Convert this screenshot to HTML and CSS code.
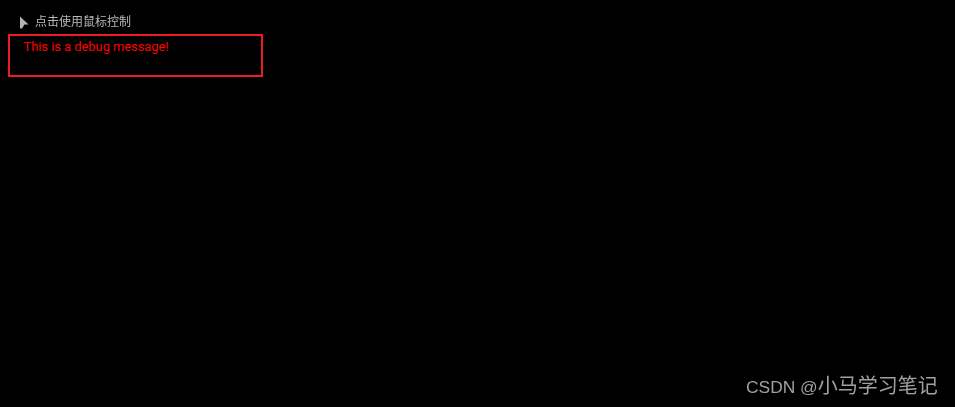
FILE: index.html
```html
<!DOCTYPE html>
<html lang="zh">
<head>
<meta charset="utf-8">
<title>Debug</title>
<link rel="stylesheet" href="styles.css">
</head>
<body>
<main class="stage">
  <div class="hint">
    <svg class="cursor" width="10" height="14" viewBox="0 0 10 14"><path d="M1 0.5 L9.5 8.5 L5.5 8.5 L3 12.5 L1 12.5 Z" fill="#b4b4b4"/></svg>
    <span class="hint-text">点击使用鼠标控制</span>
  </div>
  <div class="debug">This is a debug message!</div>
  <div class="spacer"></div>
  <div class="mark"><span class="mark-latin">CSDN @</span>小马学习笔记</div>
</main>
</body>
</html>
```
FILE: styles.css
```css
html, body {
  margin: 0;
  height: 100%;
  background: #000;
  overflow: hidden;
}
.stage {
  box-sizing: border-box;
  width: 955px;
  height: 407px;
  padding: 16px 17px 8px 8px;
  display: flex;
  flex-direction: column;
  align-items: flex-start;
  background: #000;
  font-family: Roboto, "Noto Sans CJK SC", sans-serif;
}
.hint {
  display: flex;
  align-items: flex-start;
  gap: 6px;
  height: 14px;
  padding-left: 11px;
  margin-bottom: 4px;
}
.cursor { display: block; }
.hint-text {
  font-size: 12px;
  line-height: 12px;
  color: #b8b8b8;
  will-change: transform;
}
.debug {
  box-sizing: border-box;
  width: 255px;
  height: 43px;
  border: 2px solid #ed1c24;
  padding: 3px 0 0 13.5px;
  font-size: 12.85px;
  line-height: 16px;
  color: #f00;
}
.spacer { flex: 1; }
.mark {
  align-self: flex-end;
  font-family: "Noto Sans CJK SC", sans-serif;
  font-size: 20px;
  line-height: 24px;
  color: #a0a0a0;
  will-change: transform;
}
.mark-latin {
  font-family: "Liberation Sans", sans-serif;
  font-size: 17.4px;
}
```
